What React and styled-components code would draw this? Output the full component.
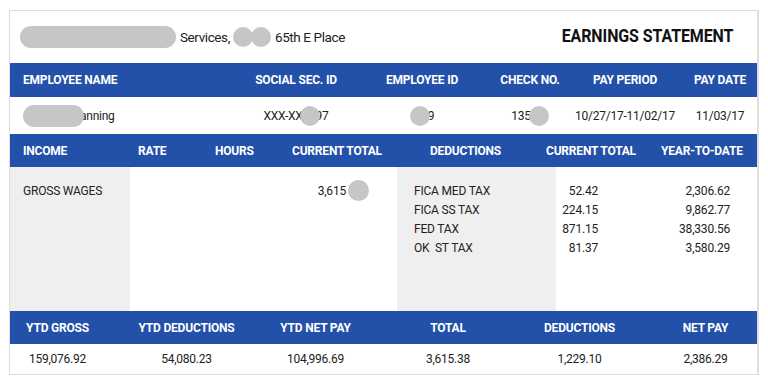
import React from "react";
import styled, { createGlobalStyle } from "styled-components";

const GlobalStyle = createGlobalStyle`
  body {
    margin: 0;
    background: #ffffff;
    font-family: Roboto, "Liberation Sans", Arial, sans-serif;
    color: #222222;
  }
`;

const BLUE = "#2350a8";
const GREY = "#efefef";

const Page = styled.div`
  padding: 10px 0 0 9px;
`;

const Card = styled.div`
  width: 750px;
  box-sizing: border-box;
  border: 1px solid #dcdcdc;
  border-right: 2px solid #e2dede;
  background: #ffffff;
`;

const TopBar = styled.div`
  height: 52px;
  display: flex;
  align-items: center;
  justify-content: space-between;
  padding: 0 24px 0 10px;
`;

const Company = styled.div`
  display: flex;
  align-items: center;
  font-size: 13.5px;
  letter-spacing: -0.4px;
  color: #222;
`;

const Blob = styled.span`
  display: inline-block;
  width: ${(p) => p.$w}px;
  height: ${(p) => p.$h || 20}px;
  border-radius: ${(p) => (p.$h || 20) / 2}px;
  background: #c6c6c6;
  margin: 0 ${(p) => p.$mr || 0}px 0 ${(p) => p.$ml || 0}px;
  vertical-align: middle;
  position: relative;
`;

const Title = styled.h1`
  margin: 0 0 4px;
  font-size: 19px;
  font-weight: 700;
  color: #111;
  letter-spacing: -0.1px;
  transform: scaleX(0.84);
  transform-origin: right center;
  white-space: nowrap;
`;

const InfoGrid = styled.div`
  display: grid;
  grid-template-columns: 231px 110px 142px 74px 116px 1fr;
  grid-template-rows: 34px 37px;
`;

const HeadCell = styled.div`
  background: ${BLUE};
  color: #ffffff;
  font-weight: 700;
  font-size: 12px;
  letter-spacing: -0.2px;
  display: flex;
  align-items: center;
  justify-content: ${(p) => (p.$left ? "flex-start" : "center")};
  padding: 0 ${(p) => p.$pr || 0}px 0 ${(p) => (p.$left ? 13 : p.$pl || 0)}px;
  white-space: nowrap;
`;

const ValueCell = styled.div`
  font-size: 12px;
  letter-spacing: -0.25px;
  display: flex;
  align-items: center;
  justify-content: ${(p) => (p.$left ? "flex-start" : "center")};
  padding: 0 ${(p) => p.$pr || 0}px 0 ${(p) => (p.$left ? 13 : p.$pl || 0)}px;
  white-space: nowrap;
`;

const EarnHead = styled.div`
  height: 33px;
  background: ${BLUE};
  display: grid;
  grid-template-columns: 115px 77px 77px 138px 116px 115px 1fr;
  align-items: center;
  padding-left: 13px;
`;

const EarnLabel = styled.span`
  color: #ffffff;
  font-weight: 700;
  font-size: 12px;
  letter-spacing: -0.2px;
  white-space: nowrap;
`;

const EarnBody = styled.div`
  height: 144px;
  display: grid;
  grid-template-columns: 120px 267px 159px 54px 1fr;
  font-size: 12px;
  letter-spacing: -0.2px;
`;

const Column = styled.div`
  background: ${(p) => (p.$shaded ? GREY : "transparent")};
  padding: 14px ${(p) => p.$pr || 0}px 0 ${(p) => p.$pl || 0}px;
  display: flex;
  flex-direction: column;
  align-items: ${(p) => (p.$right ? "flex-end" : "flex-start")};
`;

const Line = styled.div`
  height: 19px;
  display: flex;
  align-items: center;
  white-space: pre;
`;

const TotalsGrid = styled.div`
  display: grid;
  grid-template-columns: 113px 127px 131px 134px 129px 1fr;
  grid-template-rows: 33px 30px;
`;

const info = [
  { label: "EMPLOYEE NAME", left: true },
  { label: "SOCIAL SEC. ID" },
  { label: "EMPLOYEE ID" },
  { label: "CHECK NO." },
  { label: "PAY PERIOD" },
  { label: "PAY DATE" },
];

const deductions = [
  ["FICA MED TAX", "52.42", "2,306.62"],
  ["FICA SS TAX", "224.15", "9,862.77"],
  ["FED TAX", "871.15", "38,330.56"],
  ["OK  ST TAX", "81.37", "3,580.29"],
];

// pr / pl nudge the centred text of the first and last columns
const totals = [
  { label: "YTD GROSS", value: "159,076.92", pr: 18 },
  { label: "YTD DEDUCTIONS", value: "54,080.23" },
  { label: "YTD NET PAY", value: "104,996.69" },
  { label: "TOTAL", value: "3,615.38" },
  { label: "DEDUCTIONS", value: "1,229.10" },
  { label: "NET PAY", value: "2,386.29", pl: 10 },
];

const App = () => {
  return (
    <Page>
      <GlobalStyle />
      <Card>
        <TopBar>
          <Company>
            <Blob $w={156} $h={22} $mr={4} />
            Services,
            <Blob $w={20} $ml={3} />
            <Blob $w={20} $ml={-2} $mr={4} />
            65th E Place
          </Company>
          <Title>EARNINGS STATEMENT</Title>
        </TopBar>

        <InfoGrid>
          {info.map((c) => (
            <HeadCell key={c.label} $left={c.left}>
              {c.label}
            </HeadCell>
          ))}
          <ValueCell $left>
            <Blob $w={61} $h={22} $mr={-4} />
            anning
          </ValueCell>
          <ValueCell>
            XXX-XX
            <Blob $w={20} $ml={-3} $mr={-4} />
            97
          </ValueCell>
          <ValueCell>
            <Blob $w={20} $mr={-2} />9
          </ValueCell>
          <ValueCell>
            135
            <Blob $w={20} $ml={-2} />
          </ValueCell>
          <ValueCell>10/27/17-11/02/17</ValueCell>
          <ValueCell>11/03/17</ValueCell>
        </InfoGrid>

        <EarnHead>
          {["INCOME", "RATE", "HOURS", "CURRENT TOTAL", "DEDUCTIONS", "CURRENT TOTAL", "YEAR-TO-DATE"].map(
            (l, i) => (
              <EarnLabel key={i}>{l}</EarnLabel>
            )
          )}
        </EarnHead>

        <EarnBody>
          <Column $shaded $pl={13}>
            <Line>GROSS WAGES</Line>
          </Column>
          <Column $right $pr={28}>
            <Line>
              3,615
              <Blob $w={21} $h={21} $ml={2} />
            </Line>
          </Column>
          <Column $shaded $pl={17}>
            {deductions.map((d) => (
              <Line key={d[0]}>{d[0]}</Line>
            ))}
          </Column>
          <Column $right $pr={12}>
            {deductions.map((d) => (
              <Line key={d[0]}>{d[1]}</Line>
            ))}
          </Column>
          <Column $right $pr={27}>
            {deductions.map((d) => (
              <Line key={d[0]}>{d[2]}</Line>
            ))}
          </Column>
        </EarnBody>

        <TotalsGrid>
          {totals.map((t) => (
            <HeadCell key={t.label} $pl={t.pl} $pr={t.pr}>
              {t.label}
            </HeadCell>
          ))}
          {totals.map((t) => (
            <ValueCell key={t.label} $pl={t.pl} $pr={t.pr}>
              {t.value}
            </ValueCell>
          ))}
        </TotalsGrid>
      </Card>
    </Page>
  );
};

export default App;
